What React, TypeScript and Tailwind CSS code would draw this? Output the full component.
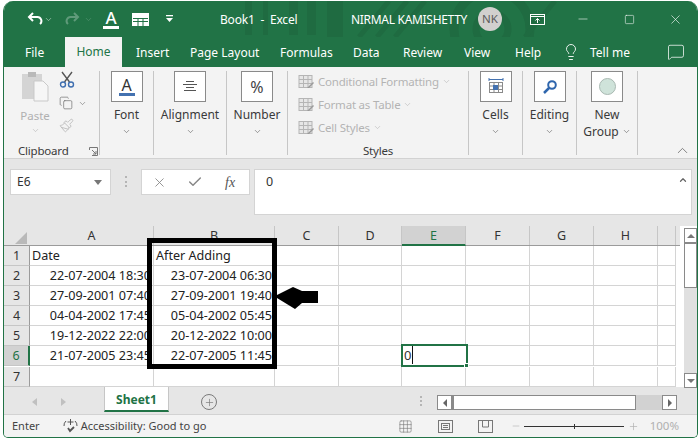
import React from "react";
import { Copy, Paintbrush, ChevronDown, ChevronUp, Lightbulb, MessageSquare, X, Check, Minus, Square, Plus, Grid3x3 } from "lucide-react";

const Chev = ({ className = "" }: { className?: string }) => <ChevronDown size={9} strokeWidth={1.5} className={"shrink-0 " + className} />;

const Sep = () => <div className="w-px h-[84px] bg-[#c6c6c6] shrink-0" />;

const BigBtn = ({ label, second, children, width }: { label: string; second?: string; children: React.ReactNode; width: string }) => (
  <div className={"flex flex-col items-center shrink-0 " + width}>
    <div className="w-[32px] h-[31px] bg-white border border-[#8a8a8a] flex items-center justify-center">{children}</div>
    <div className="mt-[4px] text-[12px] leading-[17px] text-[#3a3a3a]">{label}</div>
    {second ? (
      <div className="flex items-center gap-[3px] text-[12px] leading-[17px] text-[#3a3a3a]">{second}<Chev className="text-[#555]" /></div>
    ) : (
      <Chev className="mt-[4px] text-[#555]" />
    )}
  </div>
);

const StyleRow = ({ label, icon }: { label: string; icon: React.ReactNode }) => (
  <div className="flex items-center gap-[3px] h-[23px] text-[11.5px] tracking-[-0.2px] text-[#b3b3b3]">
    {icon}
    <span>{label}</span>
    <Chev className="text-[#b3b3b3]" />
  </div>
);

const TableIcon = () => (
  <svg width="17" height="16" viewBox="0 0 17 16" fill="none" stroke="#b5b5b5">
    <rect x="1" y="1.5" width="13" height="12" fill="#e6e6e6" />
    <path d="M1 5.5h13M1 9.5h13M5.5 1.5v12M10 1.5v12" />
    <path d="M9 14l6-6 1 1-5 5z" fill="#9a9a9a" stroke="none" />
  </svg>
);

const cols = ["A", "B", "C", "D", "E", "F", "G", "H", ""];
const rows: [string, string, string][] = [
  ["1", "Date", "After Adding"],
  ["2", "22-07-2004 18:30", "23-07-2004 06:30"],
  ["3", "27-09-2001 07:40", "27-09-2001 19:40"],
  ["4", "04-04-2002 17:45", "05-04-2002 05:45"],
  ["5", "19-12-2022 22:00", "20-12-2022 10:00"],
  ["6", "21-07-2005 23:45", "22-07-2005 11:45"],
  ["7", "", ""],
];
const gridCols = "grid grid-cols-[26px_124px_121px_64px_63px_64px_64px_64px_64px_18px]";

const Cell = ({ children, right }: { children?: React.ReactNode; right?: boolean }) => (
  <div className={"h-[20px] border-r border-b border-[#d4d4d4] overflow-hidden whitespace-nowrap text-[12.6px] leading-[20px] text-[#222] px-[2px] " + (right ? "text-right" : "text-left")}>
    {children}
  </div>
);

const TabLabel = ({ children, className }: { children: React.ReactNode; className: string }) => (
  <span className={"h-[28px] leading-[27px] whitespace-nowrap " + className}>{children}</span>
);

export default function App() {
  return (
    <div className="relative w-[700px] h-[448px] bg-white overflow-hidden font-['Noto_Sans','Open_Sans',sans-serif]">
      <div className="relative ml-[3px] mt-[1px] w-[695px] h-[437px] flex flex-col overflow-hidden rounded-t-[10px] rounded-b-[5px] border-x border-b border-[#217346] bg-[#e6e6e6]">
        {/* title bar */}
        <div className="relative h-[36px] bg-[#217346] text-white flex items-center text-[12px] shrink-0">
          <svg className="absolute left-[235px] top-0" width="320" height="66" viewBox="0 0 320 66" fill="#1f6b41">
            <rect x="6" y="0" width="7" height="34" /><rect x="24" y="0" width="5" height="34" /><rect x="50" y="0" width="9" height="34" /><rect x="68" y="0" width="9" height="34" /><rect x="88" y="0" width="16" height="36" />
            <circle cx="253" cy="28" r="38" fill="none" stroke="#1f6b41" strokeWidth="9" />
            <circle cx="253" cy="28" r="16" fill="none" stroke="#1f6b41" strokeWidth="7" />
            <path d="M150 0l-30 36M168 0l-30 36M186 0l-30 36M316 0l-30 36" stroke="#1f6b41" strokeWidth="5" />
          </svg>
          <svg className="relative ml-[23px] shrink-0" width="16" height="14" viewBox="0 0 16 14" fill="none" stroke="#fff" strokeWidth="2"><path d="M6 1L2 5l4 4" /><path d="M2 5h8a4 4 0 0 1 3 7" /></svg>
          <Chev className="relative ml-[1px] text-[#d5e4da]" />
          <svg className="relative ml-[12px] shrink-0" width="15" height="14" viewBox="0 0 15 14" fill="none" stroke="#5f9a7a" strokeWidth="2"><path d="M9 1l4 4-4 4" /><path d="M13 5H6a4 4 0 0 0-3 7" /></svg>
          <Chev className="relative ml-[4px] text-[#5f9a7a]" />
          <div className="relative ml-[10px] w-[16px] flex flex-col items-center shrink-0">
            <span className="text-[17px] leading-[17px] font-medium">A</span>
            <span className="w-[16px] h-[3px] bg-white" />
          </div>
          <svg className="relative ml-[13px] shrink-0" width="17" height="13" viewBox="0 0 17 13"><rect x="0" y="0" width="17" height="13" fill="#fff" /><path d="M1 5.500h15M1 8.500h15M6 5v8M11 5v8" stroke="#217346" /></svg>
          <svg className="relative ml-[16px] shrink-0" width="9" height="8" viewBox="0 0 9 8" fill="#fff"><rect x="1" y="0" width="7" height="1.300" /><path d="M1 3h7L4.500 7z" /></svg>
          <span className="relative ml-[46px] mt-[2px] w-[77px] whitespace-pre tracking-[-0.2px]">Book1  -  Excel</span>
          <span className="relative ml-[54px] mt-[1px] w-[116px] whitespace-nowrap tracking-[-0.3px]">NIRMAL KAMISHETTY</span>
          <div className="relative ml-[11px] w-[24px] h-[24px] rounded-full bg-[#d2d0ce] text-[#5b5b5b] text-[11.5px] flex items-center justify-center shrink-0">NK</div>
          <svg className="relative ml-[28px] shrink-0" width="16" height="13" viewBox="0 0 16 13" fill="none" stroke="#fff"><rect x="0.500" y="1.500" width="14" height="10" /><path d="M0.500 3.500h14M7.500 10V5.500M5.500 7.500l2-2 2 2" /></svg>
          <Minus className="relative ml-[30px] shrink-0" size={14} strokeWidth={1} />
          <Square className="relative ml-[34px] shrink-0" size={11} strokeWidth={1.2} />
          <X className="relative ml-[33px] shrink-0" size={15} strokeWidth={1} />
        </div>
        {/* tabs */}
        <div className="relative h-[30px] bg-[#217346] text-white flex items-end text-[12px] shrink-0">
          <TabLabel className="ml-[21px] w-[17px]">File</TabLabel>
          <span className="ml-[23px] w-[57px] h-[30px] bg-[#f3f3f3] text-[#217346] text-center leading-[29px] shrink-0">Home</span>
          <TabLabel className="ml-[14px] w-[29px]">Insert</TabLabel>
          <TabLabel className="ml-[25px] w-[65px]">Page Layout</TabLabel>
          <TabLabel className="ml-[25px] w-[49px]">Formulas</TabLabel>
          <TabLabel className="ml-[24px] w-[25px]">Data</TabLabel>
          <TabLabel className="ml-[25px] w-[37px]">Review</TabLabel>
          <TabLabel className="ml-[24px] w-[26px]">View</TabLabel>
          <TabLabel className="ml-[25px] w-[25px]">Help</TabLabel>
          <Lightbulb className="ml-[22px] mb-[6px] shrink-0" size={18} strokeWidth={1.2} />
          <TabLabel className="ml-[10px] w-[38px]">Tell me</TabLabel>
          <MessageSquare className="ml-[39px] mb-[6px] shrink-0" size={18} strokeWidth={1} />
        </div>
        {/* ribbon */}
        <div className="relative h-[92px] bg-[#f3f3f3] border-b border-[#d2d2d2] flex items-start pt-[4px] shrink-0">
          <div className="w-[95px] shrink-0 h-[84px] relative text-[#b0b0b0]">
            <div className="flex">
              <div className="ml-[16px] w-[30px] flex flex-col items-center">
                <svg width="29" height="31" viewBox="0 0 29 31"><rect x="1" y="3" width="20" height="25" fill="#d4d4d4" /><rect x="7" y="1" width="8" height="5" fill="#b9b9b9" /><path d="M13 10h9l5 5v15H13z" fill="#f6f6f6" stroke="#c9c9c9" /></svg>
                <span className="text-[11.5px] leading-[16px] mt-[6px]">Paste</span>
                <Chev className="mt-[2px]" />
              </div>
              <div className="ml-[9px] flex flex-col items-start text-[#666]">
                <svg width="16" height="17" viewBox="0 0 16 17" fill="none" strokeWidth="1.400">
                  <path d="M3 1l7.500 10M13 1L5.500 11" stroke="#555" />
                  <circle cx="4" cy="13.500" r="2.500" stroke="#3f6fb0" />
                  <circle cx="12" cy="13.500" r="2.500" stroke="#3f6fb0" />
                </svg>
                <div className="flex items-center gap-[5px] mt-[8px]"><Copy size={14} strokeWidth={1.1} /><Chev /></div>
                <Paintbrush className="mt-[8px] text-[#bbb]" size={15} strokeWidth={1.4} />
              </div>
            </div>
            <div className="absolute left-[14px] bottom-[-4px] text-[11.5px] tracking-[-0.2px] leading-[16px] text-[#3a3a3a]">Clipboard</div>
            <svg className="absolute left-[85px] bottom-[-1px]" width="9" height="9" viewBox="0 0 9 9" fill="none" stroke="#777"><path d="M.5 3V.5h8v8H3M3 3l4 4M7 4v3H4" /></svg>
          </div>
          <Sep />
          <BigBtn label="Font" width="w-[53px]">
            <div className="flex flex-col items-center"><span className="text-[16px] leading-[16px] text-[#333]">A</span><span className="w-[16px] h-[3px] bg-[#4472b0]" /></div>
          </BigBtn>
          <Sep />
          <BigBtn label="Alignment" width="w-[72px]">
            <svg width="14" height="11" viewBox="0 0 14 11" stroke="#555"><path d="M3 .5h8M0 3.500h14M3 6.500h8M1 9.500h12" /></svg>
          </BigBtn>
          <Sep />
          <BigBtn label="Number" width="w-[60px]"><span className="text-[16px] text-[#444]">%</span></BigBtn>
          <Sep />
          <div className="w-[180px] shrink-0 h-[84px] relative pl-[10px] -mt-[1px]">
            <StyleRow label="Conditional Formatting" icon={<TableIcon />} />
            <StyleRow label="Format as Table" icon={<TableIcon />} />
            <StyleRow label="Cell Styles" icon={<TableIcon />} />
            <div className="absolute left-[75px] bottom-[-5px] text-[11.5px] tracking-[-0.2px] leading-[16px] text-[#3a3a3a]">Styles</div>
          </div>
          <Sep />
          <BigBtn label="Cells" width="w-[53px]">
            <svg width="16" height="17" viewBox="0 0 16 17" fill="none" stroke="#8a8a8a"><path d="M1 1.500h14M1 0v3M15 0v3" stroke="#4472b0" /><rect x="1.500" y="4.500" width="13" height="10" /><path d="M1.500 8h13M1.500 11.500h13M6 4.500v10M10.500 4.500v10" /><rect x="5" y="7" width="5" height="5" fill="#4472b0" stroke="none" /></svg>
          </BigBtn>
          <Sep />
          <BigBtn label="Editing" width="w-[53px]">
            <svg width="16" height="16" viewBox="0 0 16 16" fill="none" stroke="#2f66ad" strokeWidth="2"><circle cx="10" cy="6" r="3.800" /><path d="M7 9l-5 5" strokeWidth="2.500" /></svg>
          </BigBtn>
          <Sep />
          <BigBtn label="New" second="Group" width="w-[60px]">
            <div className="w-[17px] h-[17px] rounded-full bg-[#cfe3da] border border-[#a9b9b2]" />
          </BigBtn>
          <Sep />
          <ChevronUp className="absolute right-[6px] bottom-[-1px] text-[#555]" size={17} strokeWidth={1} />
        </div>
        {/* formula bar */}
        <div className="h-[67px] flex items-start pt-[10px] pl-[6px] shrink-0">
          <div className="w-[101px] h-[26px] bg-white border border-[#d4d4d4] flex items-center justify-between pl-[6px] pr-[8px] text-[12px] text-[#333] shrink-0">
            E6
            <svg width="8" height="5" viewBox="0 0 8 5" fill="#777"><path d="M0 0h8L4 5z" /></svg>
          </div>
          <div className="w-[30px] flex justify-center pt-[7px] shrink-0"><div className="w-[2px] h-[11px] border-l-2 border-dotted border-[#b5b5b5]" /></div>
          <div className="w-[109px] h-[26px] bg-white border border-[#d4d4d4] flex items-center text-[#888] shrink-0">
            <X className="ml-[10px]" size={15} strokeWidth={1.4} />
            <Check className="ml-[20px]" size={16} strokeWidth={2.200} />
            <span className="ml-[22px] text-[14px] italic font-['Liberation_Serif',serif] text-[#555]">fx</span>
          </div>
          <div className="relative ml-[4px] w-[438px] h-[46px] bg-white border border-[#d4d4d4] pl-[11px] pt-[3px] text-[12.5px] text-[#333] shrink-0">
            0
            <ChevronUp className="absolute right-[3px] top-[5px] text-[#666]" size={10} strokeWidth={3} />
          </div>
        </div>
        {/* sheet */}
        <div className="relative flex h-[161px] shrink-0 bg-white">
          <div className="w-[676px] shrink-0">
            <div className={gridCols + " h-[20px] bg-[#e6e6e6] border-b border-[#9b9b9b]"}>
              <div className="relative">
                <svg className="absolute right-[3px] bottom-[2px]" width="12" height="12" viewBox="0 0 12 12" fill="#b9b9b9"><path d="M12 0v12H0z" /></svg>
              </div>
              {cols.map((c, i) => (
                <div key={i} className={"h-[19px] border-r border-[#c6c6c6] text-center text-[12.5px] leading-[19px] " + (c === "E" ? "bg-[#d2d2d2] text-[#217346] border-b-2 border-b-[#217346] h-[20px]" : "text-[#333]")}>{c}</div>
              ))}
            </div>
            {rows.map(([n, a, b]) => (
              <div key={n} className={gridCols}>
                <div className={"h-[20px] border-b text-center text-[12.5px] leading-[19px] " + (n === "6" ? "bg-[#d2d2d2] text-[#217346] border-r-2 border-r-[#217346] border-b-[#c6c6c6]" : "bg-[#e6e6e6] text-[#333] border-r border-r-[#9b9b9b] border-b-[#c6c6c6]")}>{n}</div>
                <Cell right={n !== "1"}>{a}</Cell>
                <Cell right={n !== "1"}>{b}</Cell>
                <Cell /><Cell />
                {n === "6" ? (
                  <div className="relative h-[23px] w-[67px] -ml-[1px] -mt-[2px] z-10 border-2 border-[#217346] text-[13px] leading-[19px] text-[#333] pl-[1px]">
                    <span className="border-r border-[#111] pr-[1px]">0</span>
                    <div className="absolute -right-[3px] -bottom-[3px] w-[5px] h-[5px] bg-[#217346] border border-white" />
                  </div>
                ) : <Cell />}
                <Cell /><Cell /><Cell /><Cell />
              </div>
            ))}
          </div>
          {/* vertical scrollbar */}
          <div className="relative z-10 ml-[4px] mt-[2px] w-[15px] h-[160px] bg-[#e0e0e0] flex flex-col">
            <div className="h-[15px] bg-white border border-[#8a8a8a] flex items-center justify-center shrink-0"><svg width="8" height="4" viewBox="0 0 8 4" fill="#777"><path d="M4 0l4 4H0z" /></svg></div>
            <div className="h-[45px] bg-white border border-[#8a8a8a] shrink-0" />
            <div className="flex-1" />
            <div className="h-[15px] bg-white border border-[#8a8a8a] flex items-center justify-center shrink-0"><svg width="8" height="4" viewBox="0 0 8 4" fill="#777"><path d="M0 0h8L4 4z" /></svg></div>
          </div>
        </div>
        {/* tab bar */}
        <div className="h-[28px] flex items-start shrink-0 bg-[#e6e6e6] border-b border-[#d2d2d2]">
          <svg className="ml-[28px] mt-[11px] shrink-0" width="5" height="8" viewBox="0 0 5 8" fill="#c0c0c0"><path d="M5 0v8L0 4z" /></svg>
          <svg className="ml-[24px] mt-[11px] shrink-0" width="5" height="8" viewBox="0 0 5 8" fill="#c0c0c0"><path d="M0 0v8l5-4z" /></svg>
          <div className="ml-[38px] w-[65px] h-[25px] bg-white border-x border-[#c6c6c6] border-b-2 border-b-[#217346] text-center text-[12px] leading-[26px] font-bold text-[#217346] shrink-0">Sheet1</div>
          <div className="ml-[32px] mt-[7px] w-[16px] h-[16px] rounded-full border border-[#7a7a7a] flex items-center justify-center text-[#7a7a7a] shrink-0"><Plus size={11} strokeWidth={1.5} /></div>
          <div className="ml-[203px] mt-[9px] flex flex-col gap-[2px] shrink-0">
            <i className="w-[2px] h-[2px] bg-[#b5b5b5]" /><i className="w-[2px] h-[2px] bg-[#b5b5b5]" /><i className="w-[2px] h-[2px] bg-[#b5b5b5]" />
          </div>
          <div className="ml-[15px] mt-[8px] w-[240px] h-[15px] bg-[#d2d2d2] flex shrink-0">
            <div className="w-[15px] bg-white border border-[#8a8a8a] flex items-center justify-center shrink-0"><svg width="4" height="8" viewBox="0 0 4 8" fill="#666"><path d="M4 0v8L0 4z" /></svg></div>
            <div className="w-[184px] bg-white border border-[#8a8a8a] border-l-2 shrink-0" />
            <div className="flex-1" />
            <div className="w-[15px] bg-white border border-[#8a8a8a] flex items-center justify-center shrink-0"><svg width="4" height="8" viewBox="0 0 4 8" fill="#666"><path d="M0 0v8l4-4z" /></svg></div>
          </div>
        </div>
        {/* status bar */}
        <div className="flex-1 bg-[#f3f3f3] flex items-center text-[11px] text-[#444] pr-[18px]">
          <span className="ml-[8px]">Enter</span>
          <svg className="ml-[22px] shrink-0" width="17" height="16" viewBox="0 0 17 16" fill="none" stroke="#555"><path d="M8.500 1v6M5.500 4h6M2 8a6 6 0 0 1 2-5M15 8a6 6 0 0 0-2-5" /><path d="M6 10l2 3 4-4" strokeWidth="1.800" /></svg>
          <span className="ml-[2px] whitespace-nowrap">Accessibility: Good to go</span>
          <Grid3x3 className="ml-auto text-[#777] shrink-0" size={15} strokeWidth={1} />
          <svg className="ml-[25px] shrink-0" width="15" height="13" viewBox="0 0 15 13" fill="none" stroke="#777"><rect x="0.500" y="0.500" width="14" height="12" /><rect x="3.500" y="3.500" width="8" height="6" /><path d="M5 5.500h5M5 7.500h5" /></svg>
          <svg className="ml-[25px] shrink-0" width="15" height="13" viewBox="0 0 15 13" fill="none" stroke="#777"><rect x="0.500" y="0.500" width="14" height="12" /><path d="M4.500 1v6h6V1" /></svg>
          <Minus className="ml-[18px] text-[#b0b0b0] shrink-0" size={10} strokeWidth={1.5} />
          <div className="relative ml-[3px] w-[100px] h-px bg-[#333] shrink-0"><div className="absolute left-[50px] -top-[2px] w-px h-[5px] bg-[#333]" /></div>
          <Plus className="ml-[4px] text-[#b0b0b0] shrink-0" size={11} strokeWidth={1.5} />
          <span className="ml-[11px] text-[11.5px] text-[#b0b0b0]">100%</span>
        </div>
      </div>
      {/* annotations over the screenshot */}
      <div className="absolute left-[147px] top-[238px] w-[130px] h-[131px] border-[5px] border-black" />
      <svg className="absolute left-[277px] top-[286px]" width="41" height="23" viewBox="0 0 41 23" fill="#000"><path d="M0 9L16 1l9 4h16v12H25l-7 6L0 12z" /></svg>
    </div>
  );
}
